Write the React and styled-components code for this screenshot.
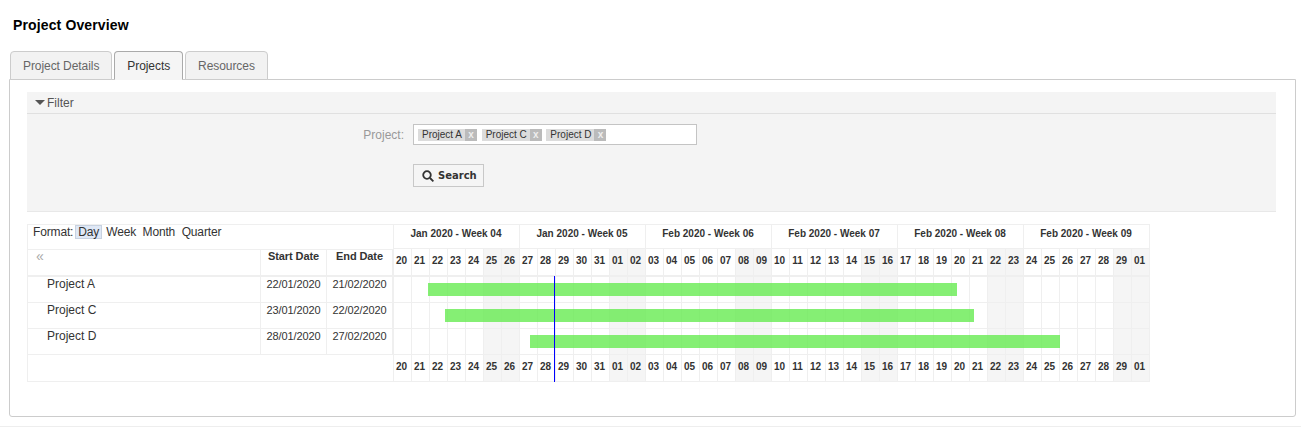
import React from 'react'
import styled, { createGlobalStyle } from 'styled-components'

const CELL = 18
const LINE = '#efefef'

const GlobalStyle = createGlobalStyle`
  html, body {
    margin: 0;
    padding: 0;
    background: #fff;
    overflow: hidden;
    font-family: "Liberation Sans", Arial, sans-serif;
    color: #333;
  }
  * { box-sizing: border-box; }
`

const Page = styled.div`
  width: 1301px;
  height: 436px;
  display: flex;
  flex-direction: column;
`

const Title = styled.h1`
  margin: 0;
  padding: 17px 0 0 13px;
  height: 51px;
  font-size: 14px;
  line-height: 16px;
  font-weight: 700;
  letter-spacing: 0.13px;
  color: #000;
`

const TabBar = styled.div`
  display: flex;
  gap: 2px;
  height: 29px;
  padding-left: 10px;
  margin-bottom: -1px;
  position: relative;
  z-index: 1;
`

const Tab = styled.div`
  height: 29px;
  padding: 0 12px;
  display: flex;
  align-items: center;
  font-size: 12px;
  letter-spacing: -0.07px;
  color: ${p => (p.$active ? '#333' : '#666')};
  background: ${p => (p.$active ? '#f5f5f5' : '#f2f2f2')};
  border: 1px solid ${p => (p.$active ? '#aaa' : '#ccc')};
  border-bottom: ${p => (p.$active ? '1px solid #f5f5f5' : '1px solid #ccc')};
  border-radius: 4px 4px 0 0;
`

const Panel = styled.div`
  margin-left: 9px;
  width: 1287px;
  height: 338px;
  padding: 12px 19px 0 17px;
  border: 1px solid #ccc;
  border-radius: 0 0 3px 3px;
`

const Filter = styled.section`
  height: 120px;
  background: #f4f4f4;
  border-bottom: 1px solid #e8e8e8;
`

const FilterHead = styled.div`
  height: 22px;
  padding-left: 8px;
  display: flex;
  align-items: center;
  gap: 2px;
  font-size: 12px;
  color: #555;
  border-bottom: 1px solid #e0e0e0;
`

const Caret = styled.span`
  width: 0;
  height: 0;
  border-left: 5px solid transparent;
  border-right: 5px solid transparent;
  border-top: 5px solid #555;
`

const FilterForm = styled.div`
  display: grid;
  grid-template-columns: 377px 284px;
  column-gap: 9px;
  row-gap: 17px;
  padding-top: 10px;
`

const FieldLabel = styled.label`
  font-size: 12px;
  color: #999;
  text-align: right;
  line-height: 23px;
`

const TagInput = styled.div`
  height: 21px;
  padding-left: 4px;
  display: flex;
  align-items: center;
  gap: 4.6px;
  background: #fff;
  border: 1px solid #c4c4c4;
`

const Tag = styled.span`
  height: 12px;
  display: flex;
  background: #dcdcdc;
  padding-left: 4px;
  font-size: 10px;
  line-height: 12px;
  color: #333;
`

const TagClose = styled.span`
  width: 12px;
  margin-left: 3px;
  background: #bbb;
  color: #eee;
  text-align: center;
  font-size: 10px;
  font-weight: 700;
  line-height: 12px;
`

const SearchButton = styled.button`
  grid-column: 2;
  width: 71px;
  height: 23px;
  padding: 0 0 0 8px;
  display: flex;
  align-items: center;
  gap: 4px;
  background: #f5f5f5;
  border: 1px solid #c8c8c8;
  font-family: "DejaVu Sans", Verdana, sans-serif;
  font-size: 10px;
  font-weight: 700;
  color: #333;
`

const Gantt = styled.div`
  position: relative;
  margin-top: 12px;
  display: flex;
  width: 1123px;
`

const LeftPane = styled.div`
  width: 366px;
  border-left: 1px solid ${LINE};
`

const FormatRow = styled.div`
  height: 26px;
  padding-left: 5px;
  display: flex;
  align-items: flex-start;
  font-size: 12px;
  line-height: 14px;
  letter-spacing: -0.15px;
  border-top: 1px solid ${LINE};
  border-bottom: 1px solid ${LINE};
`

const FormatOption = styled.span`
  height: 14px;
  padding: 0 3px;
  margin-right: ${p => (p.$active ? '1px' : '0.5px')};
  margin-left: ${p => (p.$first ? '2px' : '0')};
  background: ${p => (p.$active ? '#dfe8f6' : 'transparent')};
  box-shadow: ${p => (p.$active ? 'inset 0 0 0 1px #c8d2e0' : 'none')};
`

const LeftGrid = styled.div`
  display: grid;
  grid-template-columns: 233px 66px 66px;
`

const HeadCell = styled.div`
  height: 27px;
  font-size: 11px;
  line-height: 13px;
  font-weight: 700;
  letter-spacing: -0.1px;
  text-align: center;
  border-right: 1px solid ${LINE};
  border-bottom: 2px solid ${LINE};
`

const CollapseCell = styled(HeadCell)`
  text-align: left;
  padding-left: 8px;
  color: #aaa;
  font-weight: 400;
  font-size: 14px;
`

const NameCell = styled.div`
  height: 26px;
  padding-left: 19px;
  font-size: 12px;
  line-height: 14px;
  border-right: 1px solid ${LINE};
  border-bottom: 1px solid ${LINE};
`

const DateCell = styled.div`
  height: 26px;
  padding-top: 1px;
  font-size: 11px;
  line-height: 13px;
  letter-spacing: -0.1px;
  text-align: center;
  border-right: 1px solid ${LINE};
  border-bottom: 1px solid ${LINE};
`

const FootCell = styled.div`
  grid-column: 1 / -1;
  height: 27px;
  border-bottom: 1px solid ${LINE};
`

const RightPane = styled.div`
  width: 757px;
  border-left: 1px solid ${LINE};
`

const WeekRow = styled.div`
  display: grid;
  grid-template-columns: repeat(6, 126px);
  height: 25px;
  border-top: 1px solid ${LINE};
  border-bottom: 1px solid ${LINE};
`

const WeekCell = styled.div`
  padding-right: 1px;
  font-size: 10px;
  font-weight: 700;
  line-height: 17px;
  text-align: center;
  border-right: 1px solid ${LINE};
`

const DayRow = styled.div`
  display: grid;
  grid-template-columns: repeat(42, ${CELL}px);
  height: ${p => p.$height}px;
  border-bottom: ${p => p.$bottom}px solid ${LINE};
`

const DayCell = styled.div`
  padding-right: 2px;
  font-size: 10px;
  font-weight: 700;
  line-height: 24px;
  text-align: center;
  color: #333;
  background: ${p => (p.$off ? '#f5f5f5' : '#fff')};
  border-right: 1px solid ${LINE};
`

const BlankCell = styled.div`
  background: ${p => (p.$off ? '#f5f5f5' : '#fff')};
  border-right: 1px solid ${LINE};
`

const Bar = styled.div`
  position: absolute;
  height: 13px;
  left: ${p => p.$x - 27}px;
  top: ${p => p.$y - 224}px;
  width: ${p => p.$w}px;
  background: rgba(106, 236, 86, 0.82);
`

const TodayLine = styled.div`
  position: absolute;
  left: ${554 - 27}px;
  top: ${276 - 224}px;
  width: 1px;
  height: 106px;
  background: #0000ff;
`

const BottomRule = styled.div`
  margin-top: 9px;
  height: 1px;
  background: #eee;
`

const SearchIcon = () => (
  <svg width="12" height="12" viewBox="0 0 12 12" fill="none" stroke="#333" strokeWidth="1.8">
    <circle cx="5" cy="5" r="3.8" />
    <path d="M8 8l3.4 3.4" />
  </svg>
)

const days = [
  ...Array.from({ length: 12 }, (_, i) => 20 + i),
  ...Array.from({ length: 29 }, (_, i) => i + 1),
  1,
].map(d => String(d).padStart(2, '0'))

const isOff = i => i % 7 >= 5

const weeks = [
  'Jan 2020 - Week 04',
  'Jan 2020 - Week 05',
  'Feb 2020 - Week 06',
  'Feb 2020 - Week 07',
  'Feb 2020 - Week 08',
  'Feb 2020 - Week 09',
]

const projects = [
  { name: 'Project A', start: '22/01/2020', end: '21/02/2020', x: 428, w: 529, y: 283 },
  { name: 'Project C', start: '23/01/2020', end: '22/02/2020', x: 445, w: 529, y: 309 },
  { name: 'Project D', start: '28/01/2020', end: '27/02/2020', x: 530, w: 530, y: 335 },
]

const DayLabels = ({ height, bottom }) => (
  <DayRow $height={height} $bottom={bottom}>
    {days.map((d, i) => (
      <DayCell key={i} $off={isOff(i)}>{d}</DayCell>
    ))}
  </DayRow>
)

const App = () => (
  <Page>
    <GlobalStyle />
    <Title>Project Overview</Title>
    <TabBar>
      <Tab>Project Details</Tab>
      <Tab $active>Projects</Tab>
      <Tab>Resources</Tab>
    </TabBar>
    <Panel>
      <Filter>
        <FilterHead>
          <Caret />
          Filter
        </FilterHead>
        <FilterForm>
          <FieldLabel>Project:</FieldLabel>
          <TagInput>
            {projects.map(p => (
              <Tag key={p.name}>
                {p.name}
                <TagClose>x</TagClose>
              </Tag>
            ))}
          </TagInput>
          <SearchButton>
            <SearchIcon />
            Search
          </SearchButton>
        </FilterForm>
      </Filter>
      <Gantt>
        <LeftPane>
          <FormatRow>
            Format:
            <FormatOption $active $first>Day</FormatOption>
            <FormatOption>Week</FormatOption>
            <FormatOption>Month</FormatOption>
            <FormatOption>Quarter</FormatOption>
          </FormatRow>
          <LeftGrid>
            <CollapseCell>«</CollapseCell>
            <HeadCell>Start Date</HeadCell>
            <HeadCell>End Date</HeadCell>
            {projects.map(p => (
              <React.Fragment key={p.name}>
                <NameCell>{p.name}</NameCell>
                <DateCell>{p.start}</DateCell>
                <DateCell>{p.end}</DateCell>
              </React.Fragment>
            ))}
            <FootCell />
          </LeftGrid>
        </LeftPane>
        <RightPane>
          <WeekRow>
            {weeks.map(w => (
              <WeekCell key={w}>{w}</WeekCell>
            ))}
          </WeekRow>
          <DayLabels height={28} bottom={2} />
          {projects.map(p => (
            <DayRow key={p.name} $height={26} $bottom={1}>
              {days.map((d, i) => (
                <BlankCell key={i} $off={isOff(i)} />
              ))}
            </DayRow>
          ))}
          <DayLabels height={27} bottom={1} />
        </RightPane>
        {projects.map(p => (
          <Bar key={p.name} $x={p.x} $y={p.y} $w={p.w} />
        ))}
        <TodayLine />
      </Gantt>
    </Panel>
    <BottomRule />
  </Page>
)

export default App
